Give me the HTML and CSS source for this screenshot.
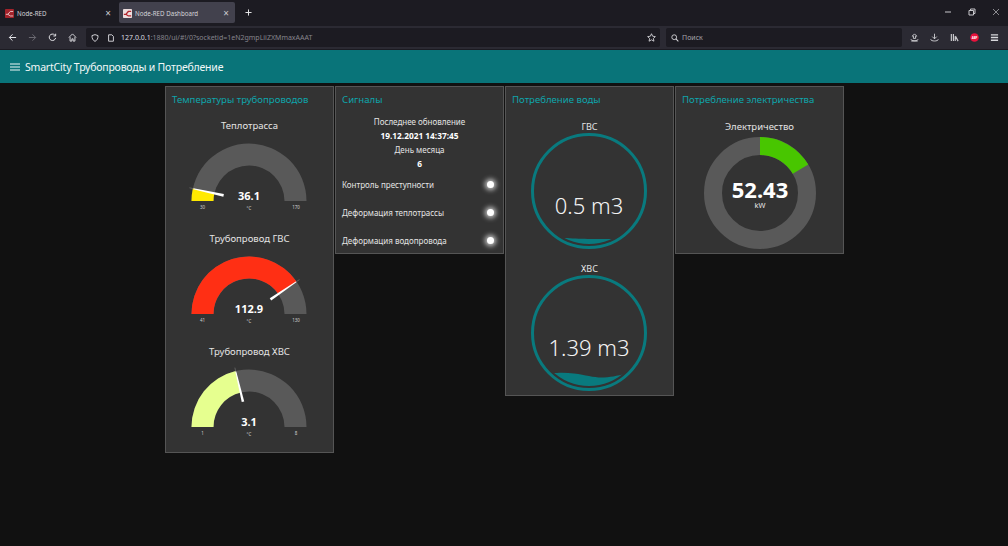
FILE: index.html
```html
<!DOCTYPE html>
<html lang="ru">
<head>
<meta charset="utf-8">
<title>Node-RED Dashboard</title>
<link rel="stylesheet" href="styles.css">
</head>
<body>
<div class="tabbar">
  <div class="tab">
    <svg class="favicon" viewBox="0 0 11 11"><rect width="11" height="11" rx="1" fill="#a3232b"/><path d="M1 6.500h2.500l3-3.500H10M3.500 6.500l3 2H10" stroke="#f4dcdc" stroke-width="1" fill="none"/></svg>
    <span class="tab-text">Node-RED</span>
    <span class="tab-x">×</span>
  </div>
  <div class="tab active">
    <svg class="favicon" viewBox="0 0 11 11"><rect width="11" height="11" rx="1" fill="#ecdede"/><path d="M1 6.500h2.500l3-3.500H10M3.500 6.500l3 2H10" stroke="#b3262e" stroke-width="1.600" fill="none"/></svg>
    <span class="tab-text">Node-RED Dashboard</span>
    <span class="tab-x">×</span>
  </div>
  <svg class="newtab" viewBox="0 0 8 8"><path d="M4 .5v7M.5 4h7" stroke="#e8e8ea" stroke-width="1.100"/></svg>
  <div class="winctl">
    <svg viewBox="0 0 8 8"><path d="M1 4h6" stroke="#c8c8cc"/></svg>
    <svg viewBox="0 0 8 8"><path d="M2.500 2.500V1h4.500v4.500H5.500M1 2.500h4.500V7H1z" stroke="#c8c8cc" fill="none"/></svg>
    <svg viewBox="0 0 8 8"><path d="M1 1l6 6M7 1L1 7" stroke="#a8a8ac" stroke-width=".8"/></svg>
  </div>
</div>
<div class="toolbar">
  <div class="nav">
    <svg viewBox="0 0 10 10"><path d="M9 5H1.500M5 1.500L1.500 5 5 8.500" stroke="#e4e4e8" stroke-width="1.100" fill="none"/></svg>
    <svg viewBox="0 0 10 10"><path d="M1 5h7.500M5 1.500L8.500 5 5 8.500" stroke="#6b6a72" stroke-width="1.100" fill="none"/></svg>
    <svg viewBox="0 0 10 10"><path d="M8.500 5.500A3.600 3.600 0 1 1 7.500 2.200M8.500 .8v2.500H6" stroke="#e4e4e8" stroke-width="1.100" fill="none"/></svg>
    <svg viewBox="0 0 10 10"><path d="M1 5l4-4 4 4M2.300 4.500V9h2V6.500h1.400V9h2V4.500" stroke="#e4e4e8" stroke-width="1" fill="none"/></svg>
  </div>
  <div class="urlbar">
    <svg class="url-icon" viewBox="0 0 10 10"><path d="M5 .8l3.800 1.200c0 3.500-1 5.800-3.800 7.200C2.200 7.800 1.200 5.500 1.200 2z" stroke="#e4e4e8" stroke-width="1.100" fill="none"/></svg>
    <svg class="url-icon" viewBox="0 0 10 10"><path d="M2 1h4l2 2v6H2z" stroke="#e4e4e8" stroke-width="1.100" fill="none"/></svg>
    <span class="url"><b>127.0.0.1</b>:1880/ui/#!/0?socketid=1eN2gmpLiiZXMmaxAAAT</span>
    <svg class="url-star" viewBox="0 0 10 10"><path d="M5 .8l1.300 2.800 3 .4-2.200 2.100.6 3L5 7.600 2.300 9.100l.6-3L.7 4l3-.4z" stroke="#e4e4e8" stroke-width=".9" fill="none"/></svg>
  </div>
  <div class="searchbar">
    <svg class="url-icon" viewBox="0 0 10 10"><circle cx="4" cy="4" r="3" stroke="#d8d8dc" stroke-width="1.100" fill="none"/><path d="M6.200 6.200L9.200 9.200" stroke="#d8d8dc" stroke-width="1.300"/></svg>
    <span class="search-text">Поиск</span>
  </div>
  <div class="tools">
    <svg viewBox="0 0 10 10"><path d="M5 1L2.500 3.500h1.300V6h2.400V3.500h1.300zM1 7c0 2 8 2 8 0M1.500 9h7" stroke="#e4e4e8" stroke-width=".9" fill="none"/></svg>
    <svg viewBox="0 0 10 10"><path d="M5 .8v5.500M2.500 4L5 6.500 7.500 4M.8 7c0 2.500 8.400 2.500 8.400 0" stroke="#e4e4e8" stroke-width=".9" fill="none"/></svg>
    <svg viewBox="0 0 10 10"><path d="M1.500 1v8M3.800 1v8M5.800 3.500v5.500M6 3.500L9 9" stroke="#c8c8cc" stroke-width="1.300" fill="none"/></svg>
    <svg viewBox="0 0 10 10"><circle cx="5" cy="5" r="4.800" fill="#e8123c"/><text class="abp" x="5" y="6.200">ABP</text></svg>
    <svg viewBox="0 0 10 10"><path d="M1 2h8M1 5h8M1 8h8" stroke="#d8d8dc" stroke-width="1.500"/></svg>
  </div>
</div>
<header class="header">
  <svg class="burger" viewBox="0 0 10 8"><path d="M0 1h10M0 4h10M0 7h10" stroke="#eef6f6" stroke-width="1"/></svg>
  <span class="app-title">SmartCity Трубопроводы и Потребление</span>
</header>
<main class="main">
  <section class="panel">
    <h2 class="panel-title">Температуры трубопроводов</h2>
    <div class="gauge">
      <div class="label">Теплотрасса</div>
      <svg class="gauge-svg" viewBox="0 0 166 87">
        <path class="track" d="M25.500 62A57.500 57.500 0 0 1 140.500 62H118.500A35.500 35.500 0 0 0 47.500 62Z"/>
        <path fill="#ffe900" d="M25.500 62A57.500 57.500 0 0 1 26.860 49.560L48.340 54.320A35.500 35.500 0 0 0 47.500 62Z"/>
        <g transform="rotate(12.500 83 62)"><polygon class="needle" points="57,60.700 57,63.300 26,62.500 26,61.500"/><path class="needle-tip" d="M26 62H22"/></g>
        <text class="g-value" x="83" y="61">36.1</text>
        <text class="g-tick" x="36.500" y="70">30</text><text class="g-tick" x="83" y="71">°C</text><text class="g-tick" x="130" y="70">170</text>
      </svg>
    </div>
    <div class="gauge">
      <div class="label">Трубопровод ГВС</div>
      <svg class="gauge-svg" viewBox="0 0 166 87">
        <path class="track" d="M25.500 62A57.500 57.500 0 0 1 140.500 62H118.500A35.500 35.500 0 0 0 47.500 62Z"/>
        <path fill="#ff2f14" d="M25.500 62A57.500 57.500 0 0 1 130.490 29.580L112.320 41.990A35.500 35.500 0 0 0 47.500 62Z"/>
        <g transform="rotate(145.700 83 62)"><polygon class="needle" points="57,60.700 57,63.300 26,62.500 26,61.500"/><path class="needle-tip" d="M26 62H22"/></g>
        <text class="g-value" x="83" y="61">112.9</text>
        <text class="g-tick" x="36.500" y="70">41</text><text class="g-tick" x="83" y="71">°C</text><text class="g-tick" x="130" y="70">130</text>
      </svg>
    </div>
    <div class="gauge">
      <div class="label">Трубопровод ХВС</div>
      <svg class="gauge-svg" viewBox="0 0 166 87">
        <path class="track" d="M25.500 62A57.500 57.500 0 0 1 140.500 62H118.500A35.500 35.500 0 0 0 47.500 62Z"/>
        <path fill="#e6ff8f" d="M25.500 62A57.500 57.500 0 0 1 69.680 6.060L74.770 27.470A35.500 35.500 0 0 0 47.500 62Z"/>
        <g transform="rotate(76.600 83 62)"><polygon class="needle" points="57,60.700 57,63.300 26,62.500 26,61.500"/><path class="needle-tip" d="M26 62H22"/></g>
        <text class="g-value" x="83" y="61">3.1</text>
        <text class="g-tick" x="36.500" y="70">1</text><text class="g-tick" x="83" y="71">°C</text><text class="g-tick" x="130" y="70">8</text>
      </svg>
    </div>
  </section>

  <section class="panel panel-signals">
    <h2 class="panel-title">Сигналы</h2>
    <div class="info">Последнее обновление</div>
    <div class="info strong">19.12.2021 14:37:45</div>
    <div class="info">День месяца</div>
    <div class="info strong">6</div>
    <div class="signals">
      <div class="signal"><span>Контроль преступности</span><i class="led"></i></div>
      <div class="signal"><span>Деформация теплотрассы</span><i class="led"></i></div>
      <div class="signal"><span>Деформация водопровода</span><i class="led"></i></div>
    </div>
  </section>

  <section class="panel">
    <h2 class="panel-title">Потребление воды</h2>
    <div class="water">
      <div class="water-label">ГВС</div>
      <svg class="water-svg" viewBox="0 0 166 120">
        <defs><clipPath id="inner"><circle cx="83" cy="58" r="53"/></clipPath></defs>
        <circle class="ring" cx="83" cy="58" r="56.500"/>
        <path class="wave" clip-path="url(#inner)" d="M20 104C55 104 65 106 85 106S120 106 150 105.500V120H20Z"/>
        <text class="w-value" x="83" y="81">0.5 m3</text>
      </svg>
    </div>
    <div class="water">
      <div class="water-label">ХВС</div>
      <svg class="water-svg" viewBox="0 0 166 120">
        <circle class="ring" cx="83" cy="58" r="56.500"/>
        <path class="wave" clip-path="url(#inner)" d="M20 101C45 98 55 97 68 98.500S88 103 98 102.500S112 100 125 98V120H20Z"/>
        <text class="w-value" x="83" y="81">1.39 m3</text>
      </svg>
    </div>
  </section>

  <section class="panel panel-power">
    <h2 class="panel-title">Потребление электричества</h2>
    <div class="donut-label">Электричество</div>
    <svg class="donut-svg" viewBox="0 0 166 118">
      <circle class="donut-track" cx="84" cy="58" r="47"/>
      <path fill="#48c600" d="M84 2A56 56 0 0 1 132.250 29.580L116.740 38.710A38 38 0 0 0 84 20Z"/>
      <text class="d-value" x="84" y="63">52.43</text>
      <text class="d-unit" x="84" y="73">kW</text>
    </svg>
  </section>
</main>
</body>
</html>
```

FILE: styles.css
```css
* { box-sizing: border-box; }
html, body { margin: 0; height: 100%; }
body {
  width: 1008px;
  height: 546px;
  overflow: hidden;
  background: #111111;
  color: #e4e4e4;
  font-family: "Noto Sans", "Open Sans", sans-serif;
  display: flex;
  flex-direction: column;
}

/* Browser tab strip */
.tabbar {
  height: 26px;
  background: #1c1b22;
  display: flex;
  align-items: flex-start;
  padding-top: 2px;
  gap: 2px;
}
.tab {
  width: 117px;
  height: 21px;
  display: flex;
  align-items: center;
  padding: 1px 5px 0;
  border-radius: 2px;
  font-size: 6.200px;
  color: #d4d4d8;
}
.tab.active { width: 116px; padding-left: 4px; background: #42414d; }
.favicon { width: 9px; height: 9px; margin-right: 3px; flex: none; }
.tab-text { flex: 1; white-space: nowrap; }
.tab-x { font-size: 10px; color: #c8c8cc; margin-right: 1px; line-height: 1; }
.newtab { width: 7px; height: 7px; margin: 7px 0 0 8px; }
.winctl { margin-left: auto; display: flex; gap: 16px; padding: 6px 8px 0 0; }
.winctl svg { width: 8px; height: 8px; }

/* Browser toolbar */
.toolbar {
  height: 24px;
  background: #2b2a33;
  display: flex;
  align-items: center;
  border-bottom: 1px solid #1c1b22;
}
.nav { width: 86px; display: flex; gap: 11px; padding-left: 8px; }
.nav svg { width: 9px; height: 9px; }
.urlbar, .searchbar {
  height: 19px;
  background: #1c1b22;
  border-radius: 2px;
  display: flex;
  align-items: center;
}
.urlbar { width: 574px; padding: 0 4px 0 5px; gap: 8px; }
.url-icon { width: 8px; height: 8px; flex: none; }
.url { flex: 1; font-size: 7px; color: #85848c; white-space: nowrap; margin-left: -2px; }
.url b { color: #dcdce0; font-weight: 400; }
.url-star { width: 9px; height: 9px; }
.searchbar { width: 236px; margin-left: 6px; padding: 0 5px; gap: 3px; }
.search-text { font-size: 7px; color: #a4a4aa; }
.tools { flex: 1; display: flex; gap: 11px; padding-left: 8px; }
.tools svg { width: 9px; height: 9px; }
.abp { font-size: 3.200px; font-weight: 700; fill: #ffffff; text-anchor: middle; }

/* Dashboard header */
.header {
  height: 33px;
  background: #097479;
  display: flex;
  align-items: center;
  padding-left: 10px;
  gap: 5px;
  flex: none;
}
.burger { width: 10px; height: 8px; }
.app-title { font-size: 10.500px; letter-spacing: -.2px; color: #f2f8f8; white-space: nowrap; }

/* Groups */
.main {
  display: flex;
  align-items: flex-start;
  gap: 1px;
  padding: 3px 0 0 165px;
}
.panel {
  width: 169px;
  background: #333333;
  border: 1px solid #555555;
}
.panel-signals, .panel-power { height: 168px; }
.panel-title {
  margin: 0;
  height: 26px;
  padding: 0 6px;
  font-size: 9.600px;
  font-weight: 400;
  line-height: 25px;
  color: #0ea5ab;
  white-space: nowrap;
}
.panel-signals .panel-title { margin-bottom: 2px; }

/* Gauges */
.gauge { height: 113px; }
.label {
  height: 26px;
  line-height: 26px;
  text-align: center;
  font-size: 9.500px;
  color: #e4e4e4;
}
.gauge-svg { display: block; width: 166px; height: 87px; }
.track { fill: #595959; }
.needle { fill: #ffffff; }
.needle-tip { stroke: #777; stroke-width: .6; }
.g-value { font-size: 11px; font-weight: 700; fill: #ffffff; text-anchor: middle; }
.g-tick { font-size: 4.500px; fill: #d0d0d0; text-anchor: middle; }

/* Signals */
.info {
  height: 14px;
  line-height: 14px;
  text-align: center;
  font-size: 8px;
  color: #e4e4e4;
}
.info.strong { font-size: 8.300px; font-weight: 700; color: #ffffff; }
.signals {
  display: flex;
  flex-direction: column;
  gap: 4px;
  margin-top: 1px;
  padding: 0 7px 0 6px;
}
.signal {
  height: 24px;
  display: flex;
  align-items: center;
  justify-content: space-between;
  font-size: 8px;
  color: #e4e4e4;
}
.led {
  width: 7px;
  height: 7px;
  border-radius: 50%;
  background: #ffffff;
  box-shadow: 0 0 5px 2px rgba(255, 255, 255, .75);
  margin-right: 2px;
}

/* Water */
.water { display: flex; flex-direction: column; align-items: center; padding-top: 6px; }
.water + .water { margin-top: 2px; }
.water-label { height: 14px; line-height: 15px; font-size: 9px; color: #e4e4e4; }
.water-svg { display: block; align-self: flex-start; width: 166px; height: 120px; }
.ring { fill: none; stroke: #097a7e; stroke-width: 3; }
.wave { fill: #097a7e; }
.w-value { font-size: 22px; font-weight: 300; fill: #f4f4f4; text-anchor: middle; }

/* Power */
.donut-label {
  height: 22px;
  padding-top: 7px;
  line-height: 14px;
  text-align: center;
  font-size: 9.500px;
  color: #e4e4e4;
}
.donut-svg { display: block; width: 166px; height: 118px; }
.donut-track { fill: none; stroke: #595959; stroke-width: 18; }
.d-value { font-size: 22px; font-weight: 700; fill: #ffffff; text-anchor: middle; }
.d-unit { font-size: 7.500px; fill: #e4e4e4; text-anchor: middle; }
```
